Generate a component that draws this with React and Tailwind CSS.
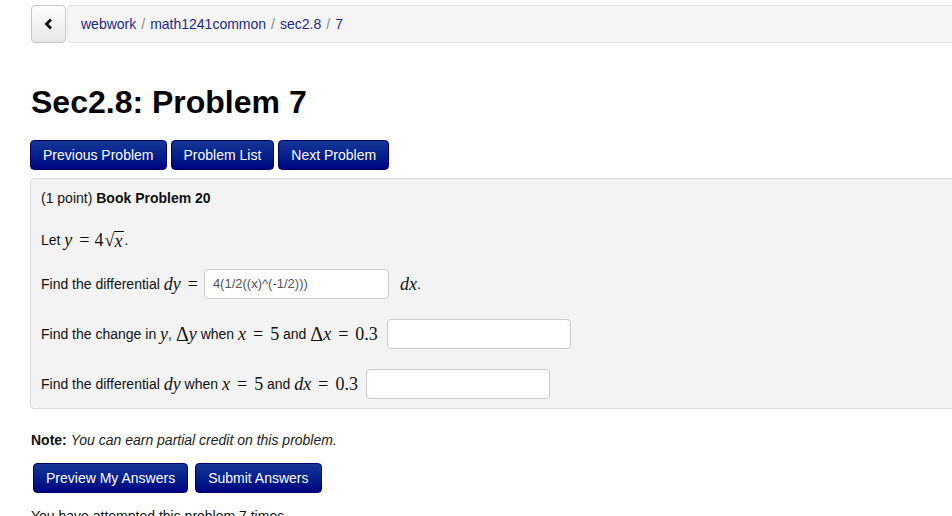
import React from "react";

const M = ({ children, className = "" }) => (
  <span className={"font-['Liberation_Serif',serif] italic text-[18px] " + className}>{children}</span>
);
const R = ({ children, className = "" }) => (
  <span className={"font-['Liberation_Serif',serif] text-[18px] " + className}>{children}</span>
);
const Eq = () => <R className="px-[7px]">=</R>;
const D = () => <R className="text-[20px] leading-none">Δ</R>;

const NavBtn = ({ children, className = "" }) => (
  <button
    className={
      "h-[30px] px-[12px] rounded-[4px] border border-[#00006a] bg-gradient-to-b from-[#163597] to-[#000080] text-white text-[14px] leading-none " +
      className
    }
  >
    {children}
  </button>
);

export default function App() {
  return (
    <div className="w-[952px] h-[516px] overflow-hidden bg-white font-['Liberation_Sans',Arial,sans-serif] text-[14px] text-[#111]">
      <div className="w-[1100px] pl-[31px]">
        {/* header */}
        <div className="flex pt-[5px]">
          <button className="w-[35px] h-[38px] rounded-[4px] border border-[#c8c8c8] bg-gradient-to-b from-white to-[#e6e6e6] flex items-center justify-center">
            <svg width="10" height="12" viewBox="0 0 10 12">
              <polyline points="7,1.5 2.5,6 7,10.5" fill="none" stroke="#111" strokeWidth="2.8" />
            </svg>
          </button>
          <div className="flex-1 ml-[1px] h-[38px] rounded-[4px] border border-[#e3e3e3] bg-[#f5f5f5] flex items-center pl-[13px] text-[14px]">
            <span className="text-[#1c2a86]">webwork</span>
            <span className="text-[#888] px-[5px]">/</span>
            <span className="text-[#1c2a86]">math1241common</span>
            <span className="text-[#888] px-[5px]">/</span>
            <span className="text-[#1c2a86]">sec2.8</span>
            <span className="text-[#888] px-[5px]">/</span>
            <span className="text-[#1c2a86]">7</span>
          </div>
        </div>

        <h1 className="mt-[39px] text-[32px] leading-[40px] font-bold text-black">Sec2.8: Problem 7</h1>

        <div className="flex gap-[4px] mt-[18px] -ml-[1px]">
          <NavBtn>Previous Problem</NavBtn>
          <NavBtn>Problem List</NavBtn>
          <NavBtn>Next Problem</NavBtn>
        </div>

        {/* problem box */}
        <div className="mt-[8px] -ml-[1px] rounded-[4px] border border-[#dcdcdc] bg-[#f3f3f3] pl-[10px] pt-[9px] pb-[9px]">
          <div className="h-[20px] flex items-center">
            (1 point)&nbsp;<b>Book Problem 20</b>
          </div>
          <div className="h-[20px] mt-[22px] flex items-center">
            Let&nbsp;<M>y</M>
            <R className="pl-[7px] pr-[5px]">=</R>
            <R>4</R>
            <R className="ml-[1px]">√</R>
            <M className="border-t border-black leading-[18px] pr-[2px]">x</M>
            <span>.</span>
          </div>
          <div className="h-[30px] mt-[19px] flex items-center">
            Find the differential&nbsp;<M>dy</M>
            <R className="pl-[7px] pr-[6px]">=</R>
            <div className="w-[185px] h-[30px] rounded-[4px] border border-[#ccc] bg-white flex items-center pl-[8px] text-[13px] text-[#555]">
              4(1/2((x)^(-1/2)))
            </div>
            <M className="ml-[11px]">dx</M>
            <span>.</span>
          </div>
          <div className="h-[30px] mt-[20px] flex items-center">
            Find the change in&nbsp;<M>y</M>,&nbsp;<D />
            <M>y</M>&nbsp;when&nbsp;<M>x</M>
            <Eq />
            <R>5</R>&nbsp;and&nbsp;<D />
            <M>x</M>
            <Eq />
            <R>0.3</R>
            <div className="ml-[9px] w-[184px] h-[30px] rounded-[4px] border border-[#ccc] bg-white" />
          </div>
          <div className="h-[30px] mt-[20px] flex items-center">
            Find the differential&nbsp;<M>dy</M>&nbsp;when&nbsp;<M>x</M>
            <Eq />
            <R>5</R>&nbsp;and&nbsp;<M>dx</M>
            <Eq />
            <R>0.3</R>
            <div className="ml-[8px] w-[184px] h-[30px] rounded-[4px] border border-[#ccc] bg-white" />
          </div>
        </div>

        <div className="mt-[21px] h-[20px] flex items-center">
          <b>Note:</b>&nbsp;<i className="text-[#222]">You can earn partial credit on this problem.</i>
        </div>

        <div className="flex gap-[7px] mt-[13px] ml-[2px]">
          <NavBtn>Preview My Answers</NavBtn>
          <NavBtn>Submit Answers</NavBtn>
        </div>

        <div className="mt-[13px]">You have attempted this problem 7 times.</div>
      </div>
    </div>
  );
}
